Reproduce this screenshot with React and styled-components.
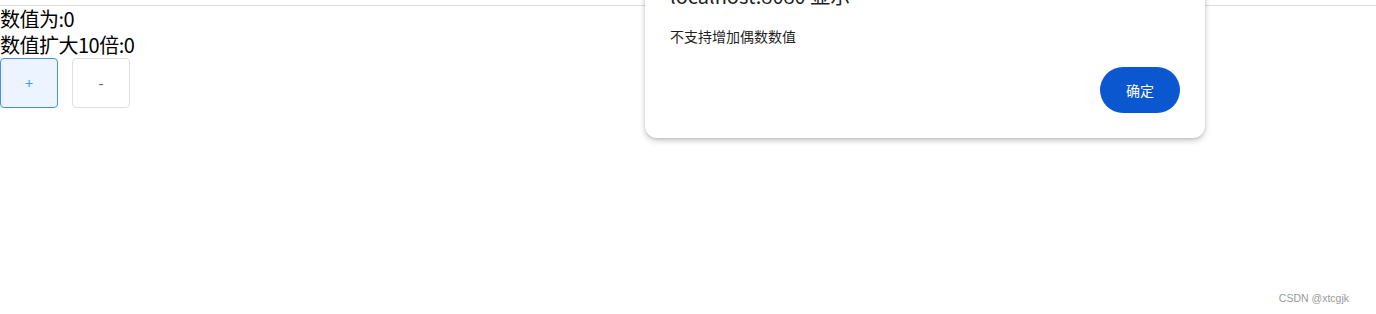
import React from 'react';
import styled, { createGlobalStyle } from 'styled-components';

const GlobalStyle = createGlobalStyle`
    html, body {
        margin: 0;
        padding: 0;
        background: #ffffff;
    }
    body {
        font-family: "Noto Sans CJK SC", "Noto Sans", sans-serif;
        width: 1376px;
        height: 314px;
        overflow: hidden;
        position: relative;
    }
`;

const Page = styled.div`
    position: relative;
    width: 1376px;
    height: 314px;
`;

const TopRule = styled.div`
    height: 5px;
    border-bottom: 1px solid #dedede;
`;

const Content = styled.div`
    display: flex;
    flex-direction: column;
`;

const Line = styled.div`
    font-family: "Noto Sans CJK SC", sans-serif;
    font-size: 20px;
    line-height: 26px;
    color: #000;
    letter-spacing: -0.5px;
`;

const ButtonRow = styled.div`
    display: flex;
    gap: 14px;
`;

const CountButton = styled.button`
    width: 58px;
    height: 50px;
    border-radius: 4px;
    border: 1px solid ${(p) => (p.active ? '#4a90e2' : '#dcdfe6')};
    background: ${(p) => (p.active ? '#ecf5ff' : '#ffffff')};
    color: ${(p) => (p.active ? '#409eff' : '#606266')};
    font-family: "Noto Sans", sans-serif;
    font-size: 15px;
    padding: 0;
    cursor: pointer;
`;

const Dialog = styled.div`
    position: absolute;
    left: 645px;
    top: -36px;
    width: 560px;
    box-sizing: border-box;
    padding: 20px 25px 25px 25px;
    background: #fff;
    border-radius: 12px;
    box-shadow: 0 3px 6px rgba(0, 0, 0, 0.18), 0 1px 3px rgba(0, 0, 0, 0.12);
    display: flex;
    flex-direction: column;
`;

const DialogTitle = styled.div`
    font-family: "Noto Sans CJK SC", sans-serif;
    font-size: 20px;
    line-height: 24px;
    color: #1f1f1f;
`;

const DialogMessage = styled.div`
    margin-top: 19px;
    font-family: "Noto Sans CJK SC", sans-serif;
    font-size: 14px;
    line-height: 18px;
    color: #1f1f1f;
`;

const DialogFooter = styled.div`
    display: flex;
    justify-content: flex-end;
    margin-top: 22px;
`;

const OkButton = styled.button`
    width: 80px;
    height: 46px;
    border: none;
    border-radius: 23px;
    background: #0b57d0;
    color: #fff;
    font-family: "Noto Sans CJK SC", sans-serif;
    font-size: 14px;
    cursor: pointer;
`;

const Watermark = styled.div`
    position: absolute;
    right: 27px;
    bottom: 10px;
    font-family: "Liberation Sans", sans-serif;
    font-size: 10.5px;
    color: #999;
`;

class App extends React.Component {
    state = { count: 0 };

    render() {
        const count = this.state.count;
        return (
            <Page>
                <GlobalStyle />
                <TopRule />
                <Content>
                    <Line>数值为:{count}</Line>
                    <Line>数值扩大10倍:{count * 10}</Line>
                    <ButtonRow>
                        <CountButton active>+</CountButton>
                        <CountButton>-</CountButton>
                    </ButtonRow>
                </Content>
                <Dialog>
                    <DialogTitle>localhost:8080 显示</DialogTitle>
                    <DialogMessage>不支持增加偶数数值</DialogMessage>
                    <DialogFooter>
                        <OkButton>确定</OkButton>
                    </DialogFooter>
                </Dialog>
                <Watermark>CSDN @xtcgjk</Watermark>
            </Page>
        );
    }
}

export default App;
